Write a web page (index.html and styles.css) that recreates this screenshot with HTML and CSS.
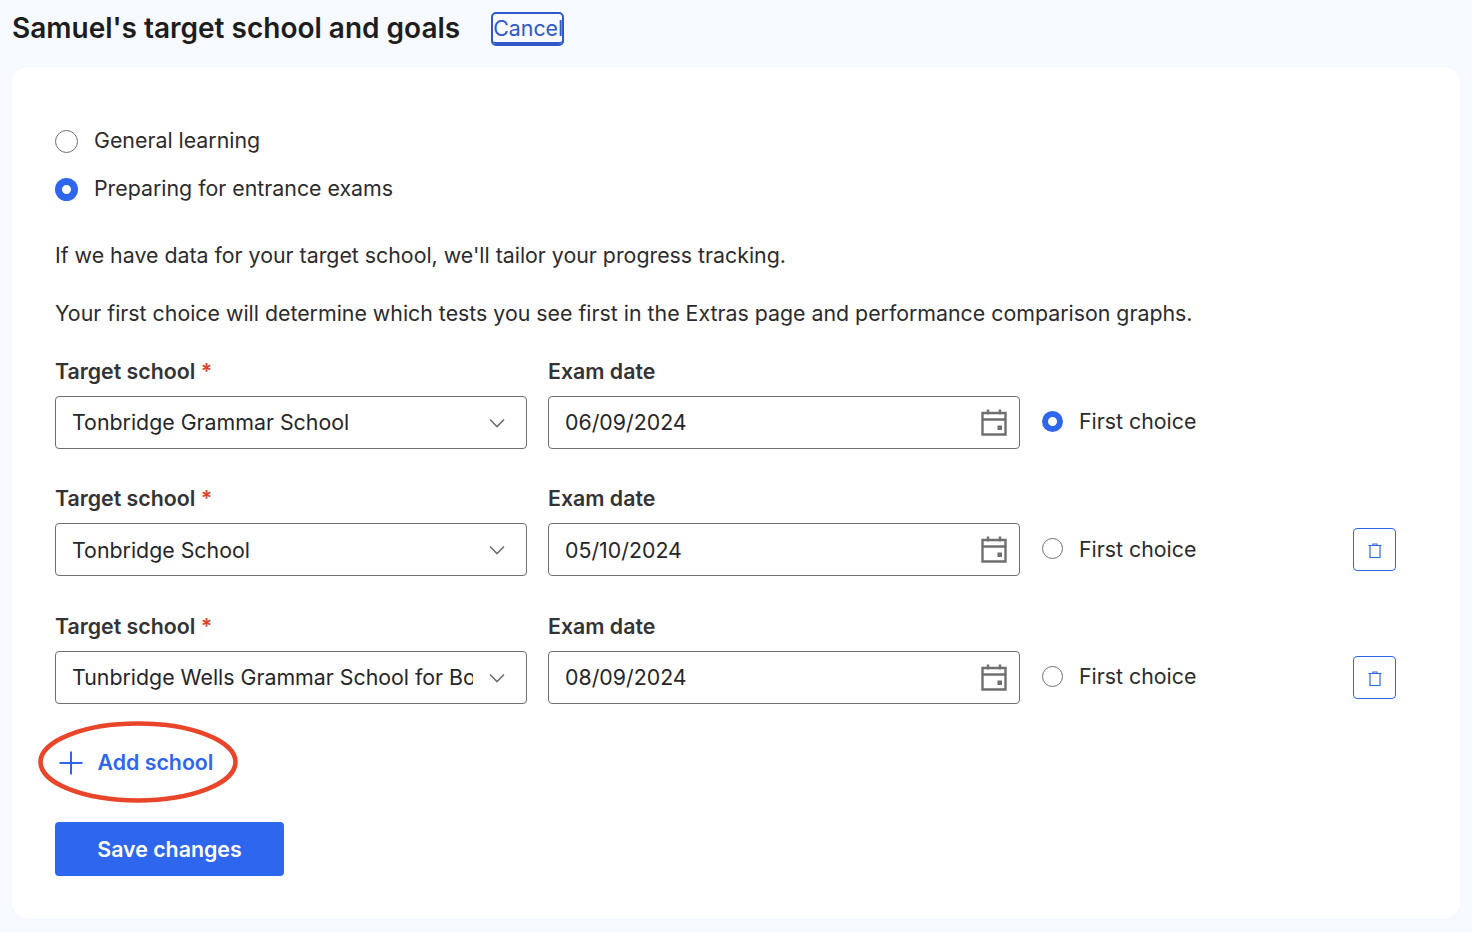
FILE: index.html
```html
<!DOCTYPE html>
<html lang="en">
<head>
<meta charset="utf-8">
<title>Target school and goals</title>
<link rel="stylesheet" href="styles.css">
</head>
<body>
<header class="top">
  <h1 class="title">Samuel's target school and goals</h1>
  <a class="cancel" href="#">Cancel</a>
</header>
<main class="card">
  <div class="goal-options">
    <div class="radio-row"><span class="radio"></span><span>General learning</span></div>
    <div class="radio-row"><span class="radio on"></span><span>Preparing for entrance exams</span></div>
  </div>
  <p class="copy first">If we have data for your target school, we'll tailor your progress tracking.</p>
  <p class="copy second">Your first choice will determine which tests you see first in the Extras page and performance comparison graphs.</p>

  <div class="school-row row-one">
    <div class="field school"><div class="label">Target school <span class="req">*</span></div>
      <div class="control"><span class="value">Tonbridge Grammar School</span>
        <svg class="chev" viewBox="0 0 16 10" width="16" height="10"><path d="M1 1.5l7 7 7-7" fill="none" stroke="#6f6f6f" stroke-width="1.6"/></svg></div></div>
    <div class="field date"><div class="label">Exam date</div>
      <div class="control"><span class="value">06/09/2024</span>
        <svg class="cal" viewBox="0 0 28 28" width="28" height="28"><path d="M2.5 5h23v21.5h-23zM2.5 11.5h23M8 1.5v5M20 1.5v5" fill="none" stroke="#6f6f6f" stroke-width="2.4"/><rect x="17.5" y="17.5" width="4.5" height="4.5" fill="#6f6f6f"/></svg></div></div>
    <div class="choice"><span class="radio small on"></span><span class="choice-text">First choice</span></div>
  </div>

  <div class="school-row row-two">
    <div class="field school"><div class="label">Target school <span class="req">*</span></div>
      <div class="control"><span class="value">Tonbridge School</span>
        <svg class="chev" viewBox="0 0 16 10" width="16" height="10"><path d="M1 1.5l7 7 7-7" fill="none" stroke="#6f6f6f" stroke-width="1.6"/></svg></div></div>
    <div class="field date"><div class="label">Exam date</div>
      <div class="control"><span class="value">05/10/2024</span>
        <svg class="cal" viewBox="0 0 28 28" width="28" height="28"><path d="M2.5 5h23v21.5h-23zM2.5 11.5h23M8 1.5v5M20 1.5v5" fill="none" stroke="#6f6f6f" stroke-width="2.4"/><rect x="17.5" y="17.5" width="4.5" height="4.5" fill="#6f6f6f"/></svg></div></div>
    <div class="choice"><span class="radio small"></span><span class="choice-text">First choice</span></div>
    <button class="trash" type="button"><svg viewBox="0 0 14 16" width="14" height="16"><path d="M0.5 2.5h13M5 2.5V1h4v1.5M2 3v11.5h10V3" fill="none" stroke="#2f66ee" stroke-width="1.2"/></svg></button>
  </div>

  <div class="school-row row-three">
    <div class="field school"><div class="label">Target school <span class="req">*</span></div>
      <div class="control"><span class="value">Tunbridge Wells Grammar School for Boys</span>
        <svg class="chev" viewBox="0 0 16 10" width="16" height="10"><path d="M1 1.5l7 7 7-7" fill="none" stroke="#6f6f6f" stroke-width="1.6"/></svg></div></div>
    <div class="field date"><div class="label">Exam date</div>
      <div class="control"><span class="value">08/09/2024</span>
        <svg class="cal" viewBox="0 0 28 28" width="28" height="28"><path d="M2.5 5h23v21.5h-23zM2.5 11.5h23M8 1.5v5M20 1.5v5" fill="none" stroke="#6f6f6f" stroke-width="2.4"/><rect x="17.5" y="17.5" width="4.5" height="4.5" fill="#6f6f6f"/></svg></div></div>
    <div class="choice"><span class="radio small"></span><span class="choice-text">First choice</span></div>
    <button class="trash" type="button"><svg viewBox="0 0 14 16" width="14" height="16"><path d="M0.5 2.5h13M5 2.5V1h4v1.5M2 3v11.5h10V3" fill="none" stroke="#2f66ee" stroke-width="1.2"/></svg></button>
  </div>

  <div class="add-wrap">
    <a class="add" href="#"><svg viewBox="0 0 24 24" width="24" height="24"><path d="M12 0.5v23M0.5 12h23" fill="none" stroke="#2f66ee" stroke-width="2"/></svg><span>Add school</span></a>
    <svg class="ring" viewBox="0 0 204 86" width="204" height="86"><ellipse cx="102" cy="43" rx="97.5" ry="38.5" fill="none" stroke="#e8452a" stroke-width="4.6"/></svg>
  </div>
  <button class="save" type="button">Save changes</button>
</main>
</body>
</html>
```
FILE: styles.css
```css
* { box-sizing: border-box; }
html, body { margin: 0; height: 932px; overflow: hidden; }
body { background: #f6f9ff; font-family: Inter, "Liberation Sans", sans-serif; color: #2b2b2e; font-size: 21.33px; }
.top { display: flex; align-items: center; height: 67px; padding: 0 0 12px 12px; }
.title { margin: 0; font-size: 28px; font-weight: 600; color: #1d1d20; line-height: 36px; }
.cancel { margin-left: 33px; outline: 2.5px solid #2f58c8; border-radius: 3px; color: #2f58c8; width: 69px; height: 30px; line-height: 29px; font-size: 21.33px; white-space: nowrap; overflow: hidden; margin-top: 2px; text-decoration: none; border-bottom: 2px solid #2f58c8; }
.card { background: #fff; margin: 0 12px; height: 851px; border-radius: 16px; padding: 58px 43px 0; }
.goal-options { display: flex; flex-direction: column; gap: 18px; }
.radio-row { display: flex; align-items: center; gap: 16px; height: 30px; }
.radio { width: 23px; height: 23px; border-radius: 50%; border: 1.5px solid #6f6f6f; background: #fff; flex: none; position: relative; top: 1px; }
.radio.on { border: 7px solid #2f66ee; }
.radio.small { width: 21px; height: 21px; top: 0; }
.radio.small.on { border-width: 6.5px; }
.copy { margin: 0; line-height: 30px; }
.copy.first { margin-top: 37px; }
.copy.second { margin-top: 28px; }
.school-row { display: flex; align-items: flex-end; height: 100px; }
.row-one { margin-top: 21px; }
.row-two { margin-top: 27px; }
.row-three { margin-top: 28px; }
.field { display: flex; flex-direction: column; }
.school { width: 472px; margin-right: 21px; }
.date { width: 472px; margin-right: 22px; }
.label { font-weight: 600; line-height: 30px; margin-bottom: 10px; color: #333336; }
.req { color: #e0402c; }
.control { display: flex; align-items: center; height: 53px; border: 1px solid #6f6f6f; border-radius: 4px; padding: 0 12px 0 16px; background: #fff; }
.value { flex: 1; white-space: nowrap; overflow: hidden; color: #26262a; position: relative; top: -0.5px; }
.row-two .value { top: 0.5px; }
.school .value { margin-right: 16px; }
.chev { margin: 0 9px 0 0; flex: none; }
.cal { flex: none; position: relative; left: 1px; top: -1px; }
.choice { display: flex; align-items: center; gap: 16px; height: 53px; width: 311px; padding-bottom: 2px; }
.row-one .choice-text, .row-three .choice-text { position: relative; top: -1px; }
.trash { width: 43px; height: 43px; border: 1px solid #2f66ee; border-radius: 4px; background: #fff; margin-bottom: 5px; padding: 2px 0 0; display: flex; align-items: center; justify-content: center; }
.add-wrap { position: relative; display: flex; align-items: center; height: 60px; margin-top: 28px; }
.add { display: flex; align-items: center; gap: 14.5px; color: #2f66ee; font-weight: 600; text-decoration: none; padding-left: 4px; }
.add svg { position: relative; top: 1px; }
.ring { position: absolute; left: -19px; top: -13px; pointer-events: none; }
.save { display: block; margin-top: 30px; width: 229px; height: 54px; background: #2f66ee; color: #fff; border: 0; border-radius: 4px; font: 600 21.33px Inter, "Liberation Sans", sans-serif; }
```
